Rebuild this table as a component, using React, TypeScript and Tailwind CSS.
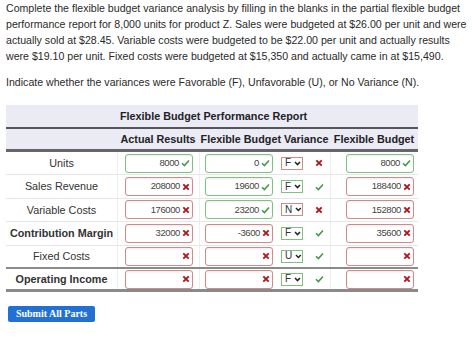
type Mark = "ok" | "bad";

interface Cell {
  value: string;
  mark: Mark;
}

interface RowData {
  label: string;
  bold?: boolean;
  actual: Cell;
  variance: Cell;
  fu: string;
  fuMark: Mark;
  fuResult: Mark;
  flexible: Cell;
  divider?: "thick" | "bottom";
}

const rows: RowData[] = [
  { label: "Units", actual: { value: "8000", mark: "ok" }, variance: { value: "0", mark: "ok" }, fu: "F", fuMark: "bad", fuResult: "bad", flexible: { value: "8000", mark: "ok" } },
  { label: "Sales Revenue", actual: { value: "208000", mark: "bad" }, variance: { value: "19600", mark: "ok" }, fu: "F", fuMark: "ok", fuResult: "ok", flexible: { value: "188400", mark: "bad" } },
  { label: "Variable Costs", actual: { value: "176000", mark: "bad" }, variance: { value: "23200", mark: "ok" }, fu: "N", fuMark: "bad", fuResult: "bad", flexible: { value: "152800", mark: "bad" } },
  { label: "Contribution Margin", bold: true, actual: { value: "32000", mark: "bad" }, variance: { value: "-3600", mark: "bad" }, fu: "F", fuMark: "ok", fuResult: "ok", flexible: { value: "35600", mark: "bad" } },
  { label: "Fixed Costs", actual: { value: "", mark: "bad" }, variance: { value: "", mark: "bad" }, fu: "U", fuMark: "ok", fuResult: "ok", flexible: { value: "", mark: "bad" }, divider: "thick" },
  { label: "Operating Income", bold: true, actual: { value: "", mark: "bad" }, variance: { value: "", mark: "bad" }, fu: "F", fuMark: "ok", fuResult: "ok", flexible: { value: "", mark: "bad" }, divider: "bottom" },
];

function Check() {
  return (
    <svg width="9" height="8" viewBox="0 0 9 8" className="shrink-0">
      <path d="M1 4.3 L3.4 6.6 L8 1.4" fill="none" stroke="#3f9a3f" strokeWidth="1.5" />
    </svg>
  );
}

function Cross() {
  return (
    <svg width="8" height="8" viewBox="0 0 8 8" className="shrink-0">
      <path d="M1.3 1.3 L6.7 6.7 M6.7 1.3 L1.3 6.7" fill="none" stroke="#b3141c" strokeWidth="1.9" />
    </svg>
  );
}

function Icon({ mark }: { mark: Mark }) {
  return mark === "ok" ? <Check /> : <Cross />;
}

function Field({ cell }: { cell: Cell }) {
  return (
    <div
      className={`w-[68px] h-[19px] rounded-[3px] border flex items-center justify-end gap-[2px] pr-[2px] bg-white shadow-[inset_0_1px_2px_rgba(0,0,0,0.08)] ${
        cell.mark === "ok" ? "border-[#7fc27f]" : "border-[#cf8a8a]"
      }`}
    >
      <span className="text-[9.5px] tracking-[-0.4px] text-[#444]">{cell.value}</span>
      <Icon mark={cell.mark} />
    </div>
  );
}

function Select({ value, mark }: { value: string; mark: Mark }) {
  return (
    <div
      className={`w-[22px] h-[13px] border flex items-center gap-[3px] pl-[3px] bg-white ${
        mark === "ok" ? "border-[#7fc27f]" : "border-[#cf8a8a]"
      }`}
    >
      <span className="text-[10px] leading-none text-[#333]">{value}</span>
      <svg width="7" height="5" viewBox="0 0 7 5">
        <path d="M1 1 L3.5 3.6 L6 1" fill="none" stroke="#222" strokeWidth="1.5" />
      </svg>
    </div>
  );
}

export default function App() {
  return (
    <div className="w-[474px] h-[338px] bg-white text-[#2a2a2a] font-['Liberation_Sans',Arial,sans-serif] overflow-hidden">
      <div className="pl-[6px] pr-[1px] text-[10.6px] leading-[16px]">
        <p>
          Complete the flexible budget variance analysis by filling in the blanks in the partial flexible budget
          performance report for 8,000 units for product Z. Sales were budgeted at $26.00 per unit and were
          actually sold at $28.45. Variable costs were budgeted to be $22.00 per unit and actually results
          were $19.10 per unit. Fixed costs were budgeted at $15,350 and actually came in at $15,490.
        </p>
        <p className="mt-[10px]">
          Indicate whether the variances were Favorable (F), Unfavorable (U), or No Variance (N).
        </p>
      </div>

      <div className="ml-[6px] mt-[15px] w-[412px] text-[10.8px] text-[#222]">
        <div className="h-[24px] bg-[#ebebf6] border-b-2 border-[#555] flex items-center pl-[114px] font-bold">
          Flexible Budget Performance Report
        </div>
        <div className="h-[23px] bg-[#ebebf6] border-b-[3px] border-[#666] flex items-center font-bold">
          <div className="w-[111px]" />
          <div className="w-[82px] text-center">Actual Results</div>
          <div className="w-[131px] text-center">Flexible Budget Variance</div>
          <div className="w-[88px] text-center">Flexible Budget</div>
        </div>
        {rows.map((r) => (
          <div
            key={r.label}
            className={`h-[23.4px] flex items-stretch ${
              r.divider === "thick"
                ? "border-b-2 border-[#8a8a8a]"
                : r.divider === "bottom"
                ? "border-b-[3px] border-[#8a8a8a]"
                : "border-b border-[#e6e6e6]"
            }`}
          >
            <div className={`w-[111px] flex items-center justify-center text-[#333] ${r.bold ? "font-bold text-[#111]" : ""}`}>
              {r.label}
            </div>
            <div className="w-[82px] border-l border-[#eeeeee] flex items-center pl-[7px]">
              <Field cell={r.actual} />
            </div>
            <div className="w-[131px] border-l border-[#eeeeee] flex items-center pl-[5px]">
              <Field cell={r.variance} />
              <div className="ml-[8px]">
                <Select value={r.fu} mark={r.fuMark} />
              </div>
              <div className="ml-[12px]">
                <Icon mark={r.fuResult} />
              </div>
            </div>
            <div className="w-[88px] border-l border-[#eeeeee] flex items-center pl-[15px]">
              <Field cell={r.flexible} />
            </div>
          </div>
        ))}
      </div>

      <button className="ml-[8px] mt-[14px] w-[87px] h-[16px] rounded-[2px] bg-[#2370d3] text-white font-bold text-[10px] leading-none font-['Liberation_Serif','Times_New_Roman',serif] flex items-center justify-center">
        Submit All Parts
      </button>
    </div>
  );
}
